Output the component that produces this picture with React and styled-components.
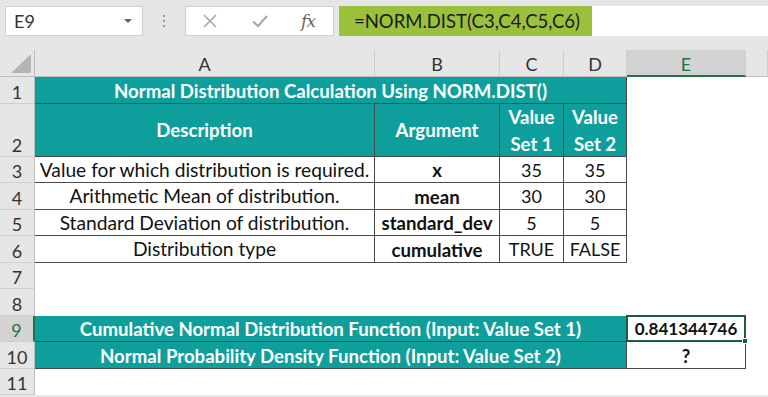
import styled, { createGlobalStyle } from "styled-components";

const GlobalStyle = createGlobalStyle`
  html, body {
    margin: 0;
    padding: 0;
    background: #e6e6e6;
    overflow: hidden;
  }
  * {
    box-sizing: border-box;
  }
`;

const TEAL = "#0e9f9d";
const EDGE = "#4a4a4a";
const GREEN = "#217346";

const Page = styled.div`
  width: 768px;
  height: 397px;
  font-family: Lato, "Open Sans", sans-serif;
  background: #e6e6e6;
  overflow: hidden;
`;

const Toolbar = styled.div`
  height: 50px;
  display: flex;
  align-items: flex-start;
  padding: 6px 0 0 5px;
`;

const NameBox = styled.div`
  width: 138px;
  height: 30px;
  background: #fff;
  border: 1px solid #cfcfcf;
  display: flex;
  align-items: center;
  justify-content: space-between;
  padding: 0 10px 0 8px;
  font-size: 18px;
  color: #333;
`;

const Caret = styled.span`
  width: 0;
  height: 0;
  border-left: 4px solid transparent;
  border-right: 4px solid transparent;
  border-top: 4px solid #666;
`;

const Grip = styled.div`
  width: 42px;
  height: 30px;
  display: flex;
  flex-direction: column;
  align-items: center;
  justify-content: center;
  gap: 3px;
  & > span {
    width: 2px;
    height: 2px;
    background: #9a9a9a;
  }
`;

const Buttons = styled.div`
  width: 149px;
  height: 30px;
  background: #fff;
  border: 1px solid #cfcfcf;
  display: flex;
  align-items: center;
  justify-content: space-between;
  padding: 0 18px 0 16px;
  color: #a8a8a8;
`;

const Fx = styled.span`
  font-family: "DejaVu Serif", "Liberation Serif", serif;
  font-style: italic;
  font-size: 17px;
  color: #666;
  letter-spacing: -1px;
`;

const Formula = styled.div`
  flex: 1;
  height: 30px;
  margin-left: 5px;
  display: flex;
  font-size: 18.5px;
`;

const FormulaText = styled.div`
  width: 253px;
  background: #9bc13c;
  color: #1a1a1a;
  display: flex;
  align-items: center;
  padding-left: 15px;
`;

const FormulaRest = styled.div`
  flex: 1;
  background: #fff;
`;

const Sheet = styled.div`
  display: grid;
  grid-template-columns: 35px 340px 125px 64px 63px 119px 22px;
  grid-template-rows: 27px 26.5px 53px repeat(9, 26.5px);
  background: #fff;
`;

const Corner = styled.div`
  background: #e6e6e6;
  border-right: 1px solid #bdbdbd;
  border-bottom: 1px solid #bdbdbd;
  display: flex;
  align-items: flex-end;
  justify-content: flex-end;
  padding: 0 3px 3px 0;
`;

const ColHead = styled.div`
  background: ${(p) => (p.selected ? "#d3d3d3" : "#e6e6e6")};
  color: ${(p) => (p.selected ? GREEN : "#333")};
  border-right: 1px solid #cdcdcd;
  border-bottom: ${(p) => (p.selected ? `2px solid ${GREEN}` : "1px solid #bdbdbd")};
  display: flex;
  align-items: center;
  justify-content: center;
  font-size: 18px;
  padding-top: 2px;
`;

const RowHead = styled.div`
  background: ${(p) => (p.selected ? "#d3d3d3" : "#e6e6e6")};
  color: ${(p) => (p.selected ? GREEN : "#333")};
  border-bottom: 1px solid #d0d0d0;
  border-right: ${(p) => (p.selected ? `2px solid ${GREEN}` : "1px solid #bdbdbd")};
  display: flex;
  align-items: flex-end;
  justify-content: center;
  font-size: 18px;
  padding-bottom: 0;
`;

const Cell = styled.div`
  grid-column: ${(p) => p.span || "auto"};
  background: ${(p) => (p.teal ? TEAL : "#fff")};
  color: ${(p) => (p.teal ? "#fff" : "#111")};
  font-weight: ${(p) => (p.bold ? 700 : 400)};
  font-size: ${(p) => p.size || (p.bold ? "18.6px" : "19.2px")};
  border-right: 1px solid ${(p) => (p.edge ? EDGE : "transparent")};
  border-bottom: 1px solid ${(p) => (p.edge ? EDGE : "transparent")};
  display: flex;
  align-items: center;
  justify-content: center;
  text-align: center;
  line-height: 1.4;
  padding-top: 2px;
  white-space: nowrap;
`;

const Active = styled(Cell)`
  position: relative;
  border: 2px solid #1d5b48;
  margin: -1px 0 0 -1px;
`;

const Handle = styled.span`
  position: absolute;
  right: -4px;
  bottom: -4px;
  width: 6px;
  height: 6px;
  background: #1d5b48;
  border: 1px solid #fff;
`;

const Blank = styled.div`
  grid-column: ${(p) => p.span || "auto"};
  background: #fff;
`;

const rows = [
  ["x", "35", "35", "Value for which distribution is required."],
  ["mean", "30", "30", "Arithmetic Mean of distribution."],
  ["standard_dev", "5", "5", "Standard Deviation of distribution."],
  ["cumulative", "TRUE", "FALSE", "Distribution type"],
];

export default function App() {
  return (
    <Page>
      <GlobalStyle />
      <Toolbar>
        <NameBox>
          E9
          <Caret />
        </NameBox>
        <Grip>
          <span />
          <span />
          <span />
        </Grip>
        <Buttons>
          <svg width="16" height="16" viewBox="0 0 16 16">
            <path d="M2 2 L14 14 M14 2 L2 14" stroke="#a8a8a8" strokeWidth="1.6" fill="none" />
          </svg>
          <svg width="18" height="16" viewBox="0 0 18 16">
            <path d="M2 8.5 L7 13 L16 3" stroke="#a8a8a8" strokeWidth="2.2" fill="none" />
          </svg>
          <Fx>fx</Fx>
        </Buttons>
        <Formula>
          <FormulaText>=NORM.DIST(C3,C4,C5,C6)</FormulaText>
          <FormulaRest />
        </Formula>
      </Toolbar>
      <Sheet>
        <Corner>
          <svg width="20" height="19" viewBox="0 0 20 19">
            <polygon points="20,0 20,19 0,19" fill="#b5b5b5" />
          </svg>
        </Corner>
        {["A", "B", "C", "D"].map((c) => (
          <ColHead key={c}>{c}</ColHead>
        ))}
        <ColHead selected>E</ColHead>
        <ColHead />

        <RowHead>1</RowHead>
        <Cell span="span 4" teal bold edge>
          Normal Distribution Calculation Using NORM.DIST()
        </Cell>
        <Blank span="span 2" />

        <RowHead>2</RowHead>
        <Cell teal bold edge>Description</Cell>
        <Cell teal bold edge>Argument</Cell>
        <Cell teal bold edge>
          Value
          <br />
          Set 1
        </Cell>
        <Cell teal bold edge>
          Value
          <br />
          Set 2
        </Cell>
        <Blank span="span 2" />

        {rows.map(([arg, v1, v2, desc], i) => (
          <>
            <RowHead key={`h${i}`}>{i + 3}</RowHead>
            <Cell key={`d${i}`} edge>{desc}</Cell>
            <Cell key={`a${i}`} edge bold>{arg}</Cell>
            <Cell key={`v${i}`} edge size="18px">{v1}</Cell>
            <Cell key={`w${i}`} edge size="18px">{v2}</Cell>
            <Blank key={`b${i}`} span="span 2" />
          </>
        ))}

        <RowHead>7</RowHead>
        <Blank span="span 6" />
        <RowHead>8</RowHead>
        <Blank span="span 6" />

        <RowHead selected>9</RowHead>
        <Cell span="span 4" teal bold edge>
          Cumulative Normal Distribution Function (Input: Value Set 1)
        </Cell>
        <Active bold size="17px">
          0.841344746
          <Handle />
        </Active>
        <Blank />

        <RowHead>10</RowHead>
        <Cell span="span 4" teal bold edge>
          Normal Probability Density Function (Input: Value Set 2)
        </Cell>
        <Cell bold edge>?</Cell>
        <Blank />

        <RowHead>11</RowHead>
        <Blank span="span 6" />
      </Sheet>
    </Page>
  );
}
